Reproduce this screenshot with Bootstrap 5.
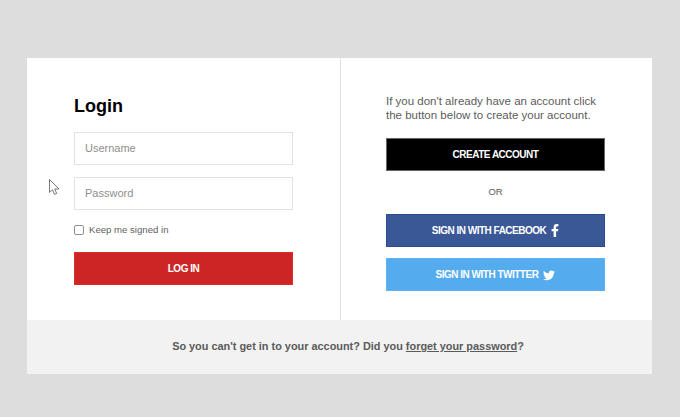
<!DOCTYPE html>
<html lang="en">
<head>
  <meta charset="UTF-8">
  <title>Login</title>
  <link rel="stylesheet" href="https://cdn.jsdelivr.net/npm/bootstrap@5.3.3/dist/css/bootstrap.min.css">
  <style>
    body { background: #dddddd; font-family: "Liberation Sans", Arial, sans-serif; height: 417px; overflow: hidden; position: relative; }
    .login-box { width: 625px; margin: 58px 0 0 27px; background: #fff; }
    .login-side { width: 313px; height: 262px; padding: 0 47px; }
    .login-side + .login-side { width: 312px; border-left: 1px solid #dfdfdf; padding: 36px 47px 0 45px; }
    .login-title { font-size: 18px; font-weight: 700; color: #000; line-height: 22px; margin: 37px 0 15px; }
    .login-input { height: 33px; border: 1px solid #e2e2e2; border-radius: 0; font-size: 11px; padding: 0 10px 2px; margin-bottom: 12px; color: #555; box-shadow: none; }
    .login-input::placeholder { color: #8e8e8e; }
    .keep-row { height: 14px; margin: 13px 0 15px; font-size: 9.6px; color: #5f5f5f; }
    .keep-row .form-check-input { width: 10px; height: 10px; margin: 0 5px 0 0; border: 1px solid #8f8f8f; border-radius: 2px; }
    .wide-btn { height: 33px; border-radius: 0; border-width: 1px; padding: 0; font-size: 10px; letter-spacing: -.5px; font-weight: 700; color: #fff; display: flex; align-items: center; justify-content: center; gap: 5px; }
    .btn-red { background: #cd2525; border-color: #dc2b2b; }
    .btn-dark-box { background: #000; border-color: #666; }
    .btn-fb { background: #3a5796; border-color: #2a4a92; }
    .btn-tw { background: #54abee; border-color: #5fb2f3; margin-top: 11px; }
    .wide-btn svg { fill: #fff; display: block; }
    .side-text { font-size: 11.5px; line-height: 14px; color: #5c5c5c; margin: 0 0 16px; height: 28px; white-space: nowrap; }
    .or-text { font-size: 9.5px; color: #5c5c5c; line-height: 41px; height: 43px; text-align: center; }
    .login-foot { height: 54px; background: #f2f2f2; font-size: 10.9px; font-weight: 700; color: #5a5a5a; padding: 0 0 1px 17px; }
    .login-foot a { color: #5a5a5a; }
    .mouse-pointer { position: absolute; left: 49px; top: 179px; }
  </style>
</head>
<body class="m-0">
  <div class="login-box">
    <div class="d-flex">
      <div class="login-side">
        <h1 class="login-title">Login</h1>
        <input type="text" class="form-control login-input" placeholder="Username">
        <input type="password" class="form-control login-input" placeholder="Password">
        <div class="keep-row d-flex align-items-center">
          <input type="checkbox" class="form-check-input" id="keep">
          <label for="keep">Keep me signed in</label>
        </div>
        <button class="btn wide-btn btn-red w-100">LOG IN</button>
      </div>
      <div class="login-side">
        <p class="side-text">If you don't already have an account click<br>the button below to create your account.</p>
        <button class="btn wide-btn btn-dark-box w-100">CREATE ACCOUNT</button>
        <div class="or-text">OR</div>
        <button class="btn wide-btn btn-fb w-100">SIGN IN WITH FACEBOOK
          <svg width="8" height="13" viewBox="0 0 320 512"><path d="M279.14 288l14.22-92.66h-88.91v-60.13c0-25.35 12.42-50.06 52.24-50.06h40.42V6.26S260.43 0 225.36 0c-73.22 0-121.08 44.38-121.08 124.72v70.62H22.89V288h81.39v224h100.17V288z"/></svg>
        </button>
        <button class="btn wide-btn btn-tw w-100">SIGN IN WITH TWITTER
          <svg width="12" height="12" viewBox="0 0 16 16"><path d="M5.026 15c6.038 0 9.341-5.003 9.341-9.334 0-.14 0-.282-.006-.422A6.685 6.685 0 0 0 16 3.542a6.658 6.658 0 0 1-1.889.518 3.301 3.301 0 0 0 1.447-1.817 6.533 6.533 0 0 1-2.087.793A3.286 3.286 0 0 0 7.875 6.03a9.325 9.325 0 0 1-6.767-3.429 3.289 3.289 0 0 0 1.018 4.382A3.323 3.323 0 0 1 .64 6.575v.045a3.288 3.288 0 0 0 2.632 3.218 3.203 3.203 0 0 1-.865.115 3.23 3.23 0 0 1-.614-.057 3.283 3.283 0 0 0 3.067 2.277A6.588 6.588 0 0 1 .78 13.58a6.32 6.32 0 0 1-.78-.045A9.344 9.344 0 0 0 5.026 15z"/></svg>
        </button>
      </div>
    </div>
    <div class="login-foot d-flex align-items-center justify-content-center">
      <span>So you can't get in to your account? Did you <a href="#">forget your password</a>?</span>
    </div>
  </div>
  <svg class="mouse-pointer" width="12" height="17" viewBox="0 0 12 17"><path d="M.5.5v13l3-2.700 2 4.600 2.200-1-2-4.400h4.300z" fill="#fff" stroke="#555" stroke-width=".8"/></svg>
</body>
</html>
